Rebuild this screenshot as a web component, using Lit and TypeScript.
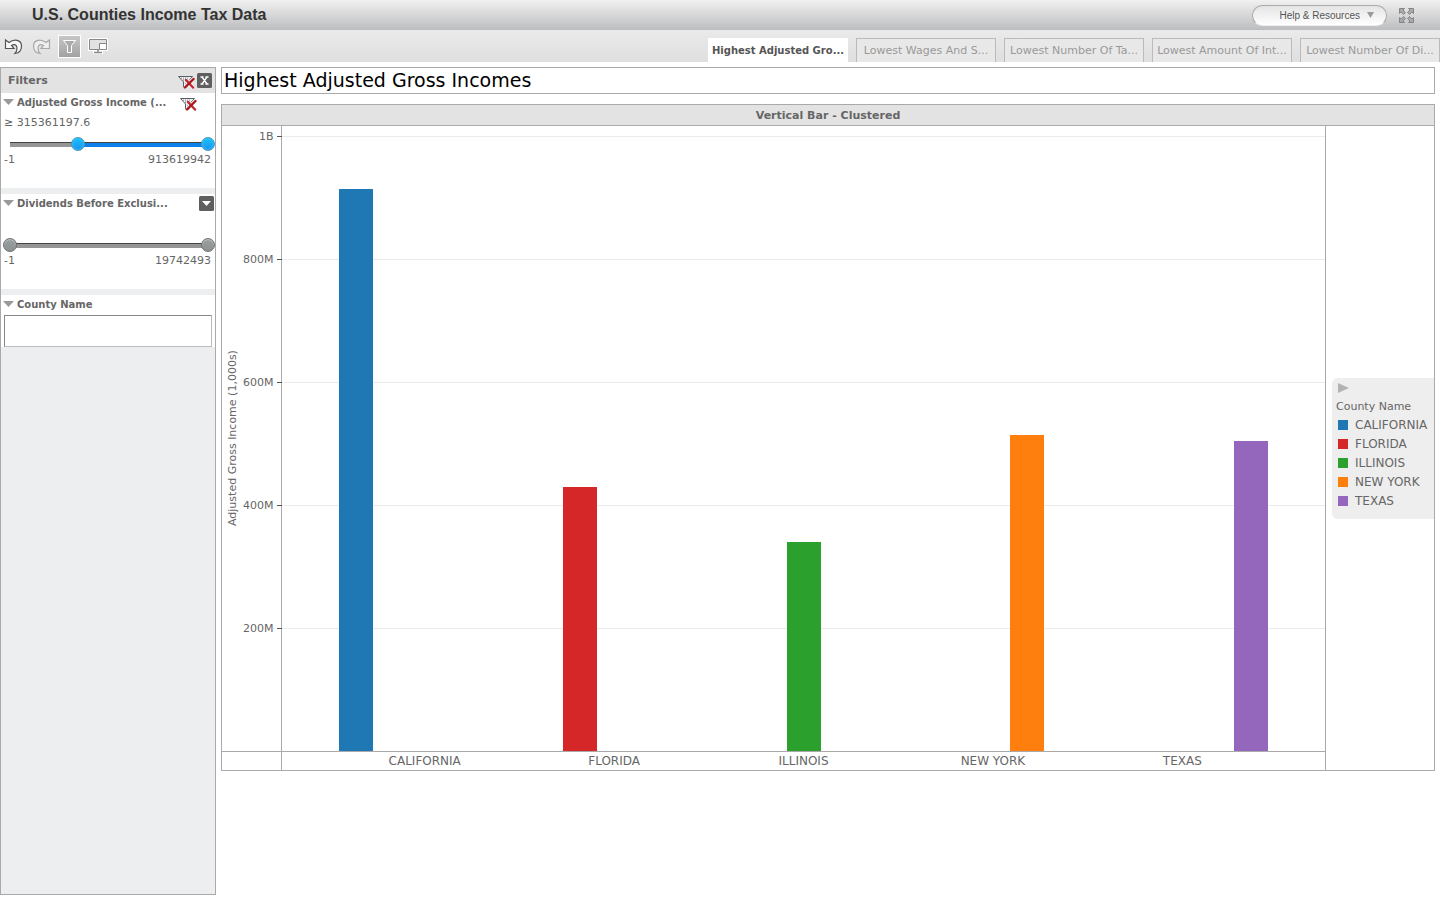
import { LitElement, html, css, svg } from "lit";
import { customElement, property } from "lit/decorators.js";

const SERIES = [
  { name: "CALIFORNIA", value: 913.6, color: "#1f77b4" },
  { name: "FLORIDA", value: 430, color: "#d62728" },
  { name: "ILLINOIS", value: 340, color: "#2ca02c" },
  { name: "NEW YORK", value: 514, color: "#ff7f0e" },
  { name: "TEXAS", value: 504, color: "#9467bd" },
];
const AXIS_MAX = 1000;
const TICKS = ["1B", "800M", "600M", "400M", "200M"];
const TABS = [
  "Highest Adjusted Gro...",
  "Lowest Wages And S...",
  "Lowest Number Of Ta...",
  "Lowest Amount Of Int...",
  "Lowest Number Of Di...",
];

const buttonReset = css`
  button {
    margin: 0;
    padding: 0;
    border: 0;
    background: none;
    color: inherit;
    font: inherit;
    cursor: pointer;
  }
  svg {
    display: block;
  }
`;

const clearFilterIcon = svg`
  <path d="M0.5 1.500h14l-5 5.500v5h-4v-5z" fill="#f2f2f4" stroke="#5a5c62"/>
  <path d="M3.500 2.500v2M5.500 2.500v4M7.500 2.500v8.500M9.500 2.500v3" stroke="#a4a8b2"/>
  <path d="M7.500 5l7.500 7.500M15 4.500l-8 8" stroke="#fff" stroke-opacity=".7" stroke-width="4"/>
  <path d="M8 5l7 7.500" stroke="#c02a30" stroke-width="2.400" stroke-linecap="round"/>
  <path d="M15.500 4L7 12.500" stroke="#a8181e" stroke-width="2.400" stroke-linecap="round"/>`;

@customElement("range-filter")
export class RangeFilter extends LitElement {
  @property() label = "";
  @property() condition = "";
  @property({ type: Number }) min = -1;
  @property({ type: Number }) max = 100;
  @property({ type: Number }) low = -1;
  @property({ type: Boolean }) active = false;

  static styles = [
    buttonReset,
    css`
      :host {
        display: block;
        background: #fff;
        color: #666;
        padding-bottom: 22px;
      }
      .head {
        display: flex;
        align-items: center;
        box-sizing: border-box;
        height: 20px;
        padding: 0 1px 2px 2px;
      }
      .name {
        display: flex;
        align-items: center;
        gap: 3px;
        flex: 1;
        min-width: 0;
        font-weight: 700;
        font-size: 10px;
        white-space: nowrap;
      }
      .clear {
        margin: 4px 17px 0 0;
      }
      .condition {
        height: 19px;
        padding-left: 3px;
        line-height: 20px;
      }
      .slider {
        display: grid;
        align-items: center;
        height: 20px;
        margin: 2px 0 0 2px;
      }
      .track,
      .slider input {
        grid-area: 1 / 1;
      }
      .track {
        height: 4px;
        margin: 0 7px;
        background: #969696;
        border-top: 1px solid #444;
      }
      .fill {
        height: 4px;
        margin-left: auto;
        background: #0d80ea;
      }
      .slider input {
        appearance: none;
        width: 100%;
        height: 14px;
        margin: 0;
        background: none;
        pointer-events: none;
      }
      .slider input::-webkit-slider-thumb {
        appearance: none;
        box-sizing: border-box;
        width: 14px;
        height: 14px;
        border: 1px solid #6c7070;
        border-radius: 50%;
        background: linear-gradient(#9a9e9e, #8b9392);
        box-shadow: inset 0 1px 1px #c4c6c6;
        pointer-events: auto;
      }
      .active input::-webkit-slider-thumb {
        border-color: #4a94ba;
        background: linear-gradient(#18c0fc, #1a94f2);
        box-shadow: inset 0 0 2px #4fe0ff;
      }
      .bounds {
        display: flex;
        justify-content: space-between;
        padding: 0 4px 0 3px;
        line-height: 12px;
      }
    `,
  ];

  render() {
    const share = ((this.max - this.low) / (this.max - this.min)) * 100;
    return html`
      <div class="head">
        <button class="name">
          <svg width="11" height="6" viewBox="0 0 11 6"><path d="M0 0h11l-5.500 6z" fill="#999" /></svg>
          ${this.label}
        </button>
        ${this.active
          ? html`<button class="clear" aria-label="Clear filter">
              <svg width="17" height="14" viewBox="0 0 17 14">${clearFilterIcon}</svg>
            </button>`
          : html`<button aria-label="Filter menu">
              <svg width="15" height="15" viewBox="0 0 15 15">
                <rect width="15" height="15" rx="1.500" fill="#5f5f5f" />
                <path d="M3 5h9l-4.500 5z" fill="#fff" />
              </svg>
            </button>`}
      </div>
      <div class="condition">${this.condition}</div>
      <div class="slider ${this.active ? "active" : ""}">
        <div class="track">
          ${this.active ? html`<div class="fill" style="width:${share}%"></div>` : ""}
        </div>
        <input type="range" aria-label="Minimum" step="any" .min=${String(this.min)} .max=${String(this.max)} .value=${String(this.low)} />
        <input type="range" aria-label="Maximum" step="any" .min=${String(this.min)} .max=${String(this.max)} .value=${String(this.max)} />
      </div>
      <div class="bounds"><span>${this.min}</span><span>${this.max}</span></div>
    `;
  }
}

@customElement("bar-chart")
export class BarChart extends LitElement {
  static styles = [
    buttonReset,
    css`
      :host {
        display: block;
        border: 1px solid #aaa;
        color: #666;
      }
      h2 {
        margin: 0;
        height: 20px;
        border-bottom: 1px solid #aaa;
        background: #e3e3e3;
        font-size: 11px;
        line-height: 21px;
        text-align: center;
      }
      .body {
        display: grid;
        grid-template-columns: 60px 1fr 109px;
        grid-template-rows: calc(100vh - 275px) auto;
      }
      .axis {
        display: flex;
        border-right: 1px solid #aaa;
      }
      .title {
        writing-mode: vertical-rl;
        transform: rotate(180deg);
        width: 21px;
        line-height: 21px;
        text-align: center;
      }
      .ticks {
        flex: 1;
        display: flex;
        flex-direction: column;
        padding-top: 10px;
      }
      .tick {
        flex: 1;
        display: flex;
        align-items: flex-start;
        justify-content: flex-end;
        gap: 3px;
        line-height: 14px;
      }
      .tick span {
        margin-top: -6px;
      }
      .tick i {
        width: 5px;
        height: 1px;
        background: #555;
      }
      .plot {
        display: grid;
      }
      .lines,
      .bars {
        grid-area: 1 / 1;
        display: flex;
        padding-top: 10px;
      }
      .lines {
        flex-direction: column;
      }
      .line {
        flex: 1;
        border-top: 1px solid #ebebeb;
      }
      .bars {
        justify-content: space-between;
        align-items: flex-end;
        padding-left: 57px;
        padding-right: 57px;
      }
      .bar {
        width: 34px;
      }
      .corner,
      .categories {
        height: 18px;
        border-top: 1px solid #aaa;
      }
      .corner {
        border-right: 1px solid #aaa;
      }
      .categories {
        display: flex;
        padding: 0 48px;
        line-height: 19px;
        text-align: center;
      }
      .categories span {
        flex: 1;
      }
      .side {
        grid-column: 3;
        grid-row: 1 / 3;
        display: flex;
        flex-direction: column;
        justify-content: center;
        border-left: 1px solid #aaa;
        padding-left: 6px;
      }
      .legend {
        padding: 4px 0 8px 4px;
        border-radius: 6px 0 0 6px;
        background: #eee;
        line-height: 19px;
      }
      .toggle {
        display: block;
        padding: 1px 0 4px 2px;
      }
      ul {
        margin: 0;
        padding: 0;
        list-style: none;
      }
      li {
        display: flex;
        align-items: center;
        gap: 7px;
        padding-left: 2px;
      }
      li,
      .categories {
        font-size: 12px;
      }
      .swatch {
        width: 10px;
        height: 10px;
      }
    `,
  ];

  render() {
    return html`
      <h2>Vertical Bar - Clustered</h2>
      <div class="body">
        <div class="axis">
          <div class="title">Adjusted Gross Income (1,000s)</div>
          <div class="ticks">
            ${TICKS.map((t) => html`<div class="tick"><span>${t}</span><i></i></div>`)}
          </div>
        </div>
        <div class="plot">
          <div class="lines">${TICKS.map(() => html`<div class="line"></div>`)}</div>
          <div class="bars">
            ${SERIES.map(
              (s) => html`<div class="bar" style="height:${(s.value / AXIS_MAX) * 100}%;background:${s.color}"></div>`
            )}
          </div>
        </div>
        <div class="side">
          <div class="legend">
            <button class="toggle" aria-label="Collapse legend">
              <svg width="11" height="10" viewBox="0 0 11 10"><path d="M0 0l11 5-11 5z" fill="#b3b3b3" /></svg>
            </button>
            <div>County Name</div>
            <ul>
              ${SERIES.map(
                (s) => html`<li><span class="swatch" style="background:${s.color}"></span>${s.name}</li>`
              )}
            </ul>
          </div>
        </div>
        <div class="corner"></div>
        <div class="categories">${SERIES.map((s) => html`<span>${s.name}</span>`)}</div>
      </div>
    `;
  }
}

@customElement("app-root")
export class AppRoot extends LitElement {
  static styles = [
    buttonReset,
    css`
      :host {
        display: flex;
        flex-direction: column;
        min-height: 100vh;
        background: #fff;
        color: #666;
        font-family: Verdana, "DejaVu Sans", sans-serif;
        font-size: 11px;
      }
      .topbar {
        display: flex;
        align-items: center;
        height: 30px;
        padding: 0 26px 0 32px;
        background: linear-gradient(#f1f1f1, #bcbdbf);
        font-family: "Liberation Sans", Arial, sans-serif;
      }
      .topbar h1 {
        flex: 1;
        margin: 0;
        color: #333;
        font-size: 16px;
        line-height: 28px;
      }
      .topbar .help {
        display: flex;
        align-items: center;
        justify-content: flex-end;
        gap: 7px;
        box-sizing: border-box;
        width: 135px;
        height: 21px;
        margin-right: 12px;
        padding-right: 12px;
        border: 1px solid #aaa;
        border-bottom-color: #eee;
        border-radius: 11px;
        background: linear-gradient(#e4e4e4, #fff);
        color: #555;
        font-size: 10px;
      }
      .toolbar {
        display: flex;
        align-items: flex-end;
        justify-content: space-between;
        height: 32px;
        background: linear-gradient(#eaeaea, #dfdfdf);
      }
      .tools {
        display: flex;
        align-items: center;
        gap: 5px;
        padding: 0 0 4px 2px;
      }
      .tools button {
        display: grid;
        place-items: center;
        width: 23px;
        height: 24px;
      }
      .tools .pressed {
        box-sizing: border-box;
        height: 23px;
        border: 1px solid #fff;
        background: linear-gradient(#c6c6c6, #a2a2a2);
      }
      .tabs {
        display: flex;
        gap: 8px;
      }
      .tabs button {
        box-sizing: border-box;
        width: 140px;
        height: 24px;
        border: 1px solid #bbb;
        border-bottom: 0;
        background: #e8e8e8;
        color: #999;
        font-size: 11px;
        line-height: 22px;
        white-space: nowrap;
      }
      .tabs .current {
        border-color: #fff;
        background: #fff;
        color: #555;
        font-size: 10px;
        font-weight: 700;
      }
      .content {
        flex: 1;
        display: flex;
        gap: 5px;
        padding: 5px 5px 5px 0;
      }
      .filters {
        box-sizing: border-box;
        width: 216px;
        flex: none;
        display: flex;
        flex-direction: column;
        gap: 6px;
        border: 1px solid #aaa;
        background: #edeef0;
      }
      .filters header {
        display: flex;
        align-items: center;
        gap: 2px;
        height: 25px;
        margin-bottom: -6px;
        padding: 0 3px 0 7px;
        background: #e3e3e3;
      }
      .filters h2 {
        flex: 1;
        margin: 0;
        font-size: 11px;
      }
      .clear {
        padding-top: 3px;
      }
      .county {
        background: #fff;
        padding: 0 3px;
      }
      .county label {
        display: flex;
        align-items: center;
        gap: 3px;
        box-sizing: border-box;
        height: 20px;
        margin-left: -1px;
        padding-bottom: 2px;
        font-size: 10px;
        font-weight: 700;
      }
      .county input {
        display: block;
        box-sizing: border-box;
        width: 100%;
        height: 32px;
        border: 1px solid #bbb;
        border-top-color: #888;
        border-left-color: #888;
        background: #fff;
      }
      .main {
        flex: 1;
        min-width: 0;
      }
      .heading {
        margin: 0 0 10px;
        padding-left: 2px;
        border: 1px solid #aaa;
        color: #000;
        font-size: 19px;
        font-weight: 400;
        line-height: 25px;
      }
    `,
  ];

  render() {
    return html`
      <div class="topbar">
        <h1>U.S. Counties Income Tax Data</h1>
        <button class="help">
          Help &amp; Resources
          <svg width="7" height="6" viewBox="0 0 7 6"><path d="M0 0h7l-3.500 6z" fill="#999" /></svg>
        </button>
        <button aria-label="Full screen">
          <svg width="15" height="15" viewBox="0 0 15 15" fill="#aaa" stroke="#858585">
            <path d="M.5 5.500v-5h5l-1.500 1.500 2.500 2.500-2 2-2.500-2.500z" />
            <path d="M14.500 5.500v-5h-5l1.500 1.500-2.500 2.500 2 2 2.500-2.500z" />
            <path d="M.5 9.500v5h5l-1.500-1.500 2.500-2.500-2-2-2.500 2.500z" />
            <path d="M14.500 9.500v5h-5l1.500-1.500-2.500-2.500 2-2 2.500 2.500z" />
          </svg>
        </button>
      </div>
      <div class="toolbar">
        <div class="tools">
          <button aria-label="Undo">
            <svg width="19" height="17" viewBox="0 0 19 17">
              <path d="M1.500 2v8.500h8.500l-2.500-3c3-2 5.500-.5 5.500 2.500 0 2-.5 4-2 5.500 4-.5 6.500-3.500 6.500-7.500C17.500 1.500 10 .5 5 4.500z" fill="#f8f8f8" stroke="#555" stroke-width="1.200" />
            </svg>
          </button>
          <button aria-label="Redo">
            <svg width="19" height="17" viewBox="0 0 19 17">
              <path d="M17.500 2v8.500H9l2.500-3c-3-2-5.500-.5-5.500 2.500 0 2 .5 4 2 5.500-4-.5-6.500-3.500-6.500-7.500C1.500 1.500 9 .5 14 4.500z" fill="#eee" stroke="#a8a8a8" stroke-width="1.200" />
            </svg>
          </button>
          <button class="pressed" aria-label="Filters">
            <svg width="13" height="15" viewBox="0 0 13 15">
              <path d="M.5 1.500h12l-4 5v7h-4v-7z" fill="#aaa" stroke="#fff" />
            </svg>
          </button>
          <button aria-label="Layout">
            <svg width="20" height="16" viewBox="0 0 20 16">
              <path d="M0 0h20v13h-5v3H5v-3H0z" fill="#fff" />
              <path d="M1.500 1.500h17v10h-17z" fill="#e2e2e2" stroke="#888" />
              <path d="M11.500 5.500h7v6h-7z" fill="#fff" stroke="#888" />
              <path d="M10 12v2M6 14.500h8" stroke="#888" stroke-width="1.500" />
            </svg>
          </button>
        </div>
        <div class="tabs" role="tablist">
          ${TABS.map(
            (t, i) => html`<button role="tab" aria-selected=${i === 0 ? "true" : "false"} class=${i === 0 ? "current" : ""}>${t}</button>`
          )}
        </div>
      </div>
      <div class="content">
        <aside class="filters">
          <header>
            <h2>Filters</h2>
            <button class="clear" aria-label="Clear all filters">
              <svg width="17" height="14" viewBox="0 0 17 14">${clearFilterIcon}</svg>
            </button>
            <button aria-label="Close">
              <svg width="15" height="15" viewBox="0 0 15 15">
                <rect width="15" height="15" rx="1.500" fill="#5f5f5f" />
                <path d="M5 4l5 7M10 4l-5 7M3.500 4h3M8.500 4h3M3.500 11h3M8.500 11h3" stroke="#fff" stroke-width="1.400" />
              </svg>
            </button>
          </header>
          <range-filter
            label="Adjusted Gross Income (..."
            condition="≥ 315361197.6"
            .max=${913619942}
            .low=${315361197.6}
            active
          ></range-filter>
          <range-filter label="Dividends Before Exclusi..." .max=${19742493}></range-filter>
          <div class="county">
            <label for="county">
              <svg width="11" height="6" viewBox="0 0 11 6"><path d="M0 0h11l-5.500 6z" fill="#999" /></svg>
              County Name
            </label>
            <input id="county" type="text" />
          </div>
        </aside>
        <main class="main">
          <h2 class="heading">Highest Adjusted Gross Incomes</h2>
          <bar-chart></bar-chart>
        </main>
      </div>
    `;
  }
}
